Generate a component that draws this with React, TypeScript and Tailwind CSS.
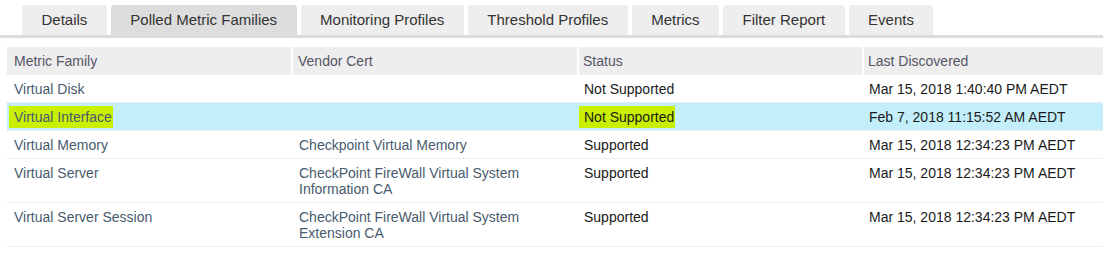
import React from "react";

const tabs = [
  "Details",
  "Polled Metric Families",
  "Monitoring Profiles",
  "Threshold Profiles",
  "Metrics",
  "Filter Report",
  "Events",
];

type Row = {
  family: string;
  cert: string;
  status: string;
  discovered: string;
  selected?: boolean;
};

const rows: Row[] = [
  { family: "Virtual Disk", cert: "", status: "Not Supported", discovered: "Mar 15, 2018 1:40:40 PM AEDT" },
  {
    family: "Virtual Interface",
    cert: "",
    status: "Not Supported",
    discovered: "Feb 7, 2018 11:15:52 AM AEDT",
    selected: true,
  },
  {
    family: "Virtual Memory",
    cert: "Checkpoint Virtual Memory",
    status: "Supported",
    discovered: "Mar 15, 2018 12:34:23 PM AEDT",
  },
  {
    family: "Virtual Server",
    cert: "CheckPoint FireWall Virtual System Information CA",
    status: "Supported",
    discovered: "Mar 15, 2018 12:34:23 PM AEDT",
  },
  {
    family: "Virtual Server Session",
    cert: "CheckPoint FireWall Virtual System Extension CA",
    status: "Supported",
    discovered: "Mar 15, 2018 12:34:23 PM AEDT",
  },
];

function Marked({ on, children }: { on?: boolean; children: React.ReactNode }) {
  if (!on) return <>{children}</>;
  return <span className="-ml-[5px] bg-[#c9f000] py-[3px] pl-[5px] pr-[1px]">{children}</span>;
}

export default function App() {
  return (
    <div className="h-[276px] w-full overflow-hidden bg-white font-['Liberation_Sans',Arial,sans-serif]">
      <div className="flex gap-[4px] border-b-[3px] border-[#dcdcdc] pl-[22px] pt-[5px]">
        {tabs.map((t) => (
          <div
            key={t}
            className={`flex h-[30px] items-center rounded-t-[3px] px-[19.5px] text-[15px] text-[#333] ${
              t === "Polled Metric Families" ? "bg-[#dddddd]" : "bg-[#eeeeee]"
            }`}
          >
            {t}
          </div>
        ))}
      </div>

      <table className="ml-[7px] mt-[9px] w-[1096px] table-fixed border-collapse text-[14px] leading-[16px]">
        <colgroup>
          <col className="w-[285px]" />
          <col className="w-[286px]" />
          <col className="w-[285px]" />
          <col />
        </colgroup>
        <thead>
          <tr className="h-[28px] bg-[#eeeeee] text-left text-[#556]">
            <th className="px-[7px] font-normal">Metric Family</th>
            <th className="border-l-2 border-white px-[5px] font-normal">Vendor Cert</th>
            <th className="border-l-2 border-white px-[4px] font-normal">Status</th>
            <th className="border-l-2 border-white px-[4px] font-normal">Last Discovered</th>
          </tr>
        </thead>
        <tbody>
          {rows.map((r) => (
            <tr
              key={r.family}
              className={`border-b border-[#eeeeee] align-top ${r.selected ? "bg-[#c2effa]" : ""}`}
            >
              <td className="px-[7px] pb-[5px] pt-[6px] text-[#485b6e]">
                <Marked on={r.selected}>{r.family}</Marked>
              </td>
              <td className="pb-[5px] pl-[7px] pr-[50px] pt-[6px] text-[#485b6e]">{r.cert}</td>
              <td className="px-[6px] pb-[5px] pt-[6px] text-[#1a1a1a]">
                <Marked on={r.selected}>{r.status}</Marked>
              </td>
              <td className="px-[6px] pb-[5px] pt-[6px] text-[#1a1a1a]">{r.discovered}</td>
            </tr>
          ))}
        </tbody>
      </table>
    </div>
  );
}
